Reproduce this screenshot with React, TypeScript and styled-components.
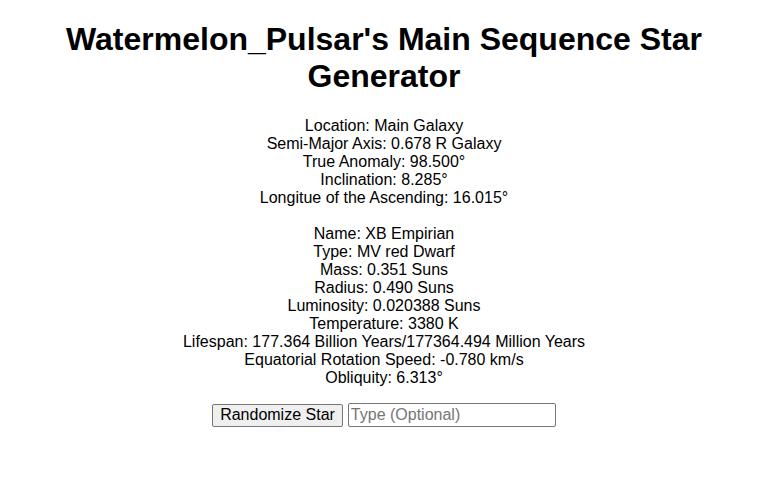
import React from 'react';
import styled, { createGlobalStyle } from 'styled-components';

const GlobalStyle = createGlobalStyle`
  body {
    margin: 8px;
    background: #ffffff;
    color: #000000;
    font-family: "Liberation Sans", Arial, sans-serif;
  }
`;

const Page = styled.div`
  text-align: center;
  font-size: 16px;
`;

const Title = styled.h1`
  font-size: 32px;
  font-weight: bold;
  margin: 13px 0 22px;
`;

const InfoBlock = styled.div`
  margin: 0;
  & + & {
    margin-top: 18px;
  }
`;

const Line = styled.div`
  line-height: 18px;
`;

const Controls = styled.div`
  display: flex;
  justify-content: center;
  align-items: center;
  gap: 5px;
  margin-top: 16px;
`;

const Button = styled.button`
  font-family: "Liberation Sans", Arial, sans-serif;
  font-size: 16px;
  height: 23px;
  padding: 1px 7px;
  background: #efefef;
  border: 1px solid #767676;
  border-radius: 2px;
  color: #000;
`;

const TypeInput = styled.input`
  font-family: "Liberation Sans", Arial, sans-serif;
  font-size: 16px;
  width: 208px;
  height: 24px;
  box-sizing: border-box;
  padding: 1px 2px;
  border: 1px solid #767676;
  border-radius: 2px;
  &::placeholder {
    color: #757575;
  }
`;

const orbit = [
  'Location: Main Galaxy',
  'Semi-Major Axis: 0.678 R Galaxy',
  'True Anomaly: 98.500°',
  'Inclination: 8.285°',
  'Longitue of the Ascending: 16.015°',
];

const star = [
  'Name: XB Empirian',
  'Type: MV red Dwarf',
  'Mass: 0.351 Suns',
  'Radius: 0.490 Suns',
  'Luminosity: 0.020388 Suns',
  'Temperature: 3380 K',
  'Lifespan: 177.364 Billion Years/177364.494 Million Years',
  'Equatorial Rotation Speed: -0.780 km/s',
  'Obliquity: 6.313°',
];

const App: React.FC = () => (
  <Page>
    <GlobalStyle />
    <Title>Watermelon_Pulsar's Main Sequence Star Generator</Title>
    <InfoBlock>
      {orbit.map((t) => (
        <Line key={t}>{t}</Line>
      ))}
    </InfoBlock>
    <InfoBlock>
      {star.map((t) => (
        <Line key={t}>{t}</Line>
      ))}
    </InfoBlock>
    <Controls>
      <Button>Randomize Star</Button>
      <TypeInput placeholder="Type (Optional)" />
    </Controls>
  </Page>
);

export default App;
